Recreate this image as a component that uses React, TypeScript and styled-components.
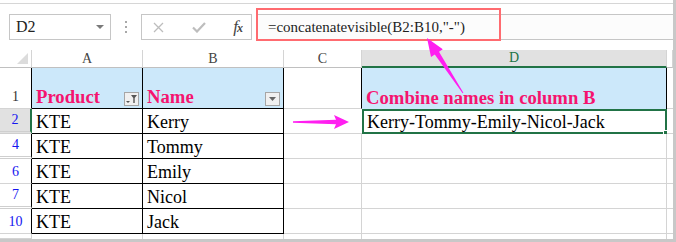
import React from 'react';
import styled, { createGlobalStyle, css } from 'styled-components';

const GlobalStyle = createGlobalStyle`
  html, body {
    margin: 0;
    padding: 0;
    background: #fff;
  }
  * {
    box-sizing: border-box;
  }
`;

const GRID = '#d4d4d4';
const GREEN = '#217346';
const PINK = '#f5146f';
const SERIF = '"Liberation Serif", "Times New Roman", serif';

const Page = styled.div`
  position: relative;
  width: 676px;
  height: 242px;
  background: #fff;
  border-right: 3px solid #c8c8c8;
  border-bottom: 3px solid #c8c8c8;
  font-family: ${SERIF};
  padding-top: 3px;
  overflow: hidden;
`;

const TopRule = styled.div`
  border-top: 1px solid #d6d6d6;
`;

const FormulaRow = styled.div`
  display: flex;
  align-items: stretch;
  height: 26px;
  margin-top: 10px;
`;

const NameBox = styled.div`
  width: 102px;
  margin-left: 9px;
  border: 1px solid #c6c6c6;
  display: flex;
  align-items: center;
  justify-content: space-between;
  padding: 0 6px 0 6px;
  font-size: 16px;
  color: #222;
`;

const Caret = styled.span`
  width: 0;
  height: 0;
  border-left: 4px solid transparent;
  border-right: 4px solid transparent;
  border-top: 4px solid #7a7a7a;
`;

const Dots = styled.div`
  width: 30px;
  display: flex;
  flex-direction: column;
  align-items: center;
  justify-content: center;
  gap: 3px;

  span {
    width: 2px;
    height: 2px;
    background: #a8a8a8;
  }
`;

const FxBox = styled.div`
  width: 111px;
  border: 1px solid #c6c6c6;
  display: flex;
  align-items: center;
  padding: 0 9px 0 11px;
  justify-content: space-between;
`;

const Fx = styled.span`
  font-family: ${SERIF};
  font-style: italic;
  font-size: 17px;
  color: #444;
  letter-spacing: -1px;

  small {
    font-size: 12px;
    font-weight: 700;
  }
`;

const FormulaInput = styled.div`
  flex: 1;
  margin-left: 5px;
  border-top: 1px solid #c6c6c6;
  border-bottom: 1px solid #c6c6c6;
  background: #fcfcfc;
  display: flex;
  align-items: center;
  padding-left: 11px;
  font-size: 15px;
  color: #1e1e1e;
`;

const Sheet = styled.div`
  margin-top: 10px;
  display: grid;
  grid-template-columns: 32px 111px 141px 78px 305px 6px;
  grid-template-rows: 18px 41px repeat(5, 25px) 5px;
`;

const Corner = styled.div`
  border-right: 1px solid ${GRID};
  border-bottom: 1px solid #c0c0c0;
  position: relative;

  &::after {
    content: '';
    position: absolute;
    right: 3px;
    bottom: 3px;
    border-left: 11px solid transparent;
    border-bottom: 11px solid #dcdcdc;
  }
`;

const ColHead = styled.div<{ $active?: boolean }>`
  display: flex;
  align-items: center;
  justify-content: center;
  font-size: 14px;
  color: #444;
  border-right: 1px solid ${GRID};
  border-bottom: 1px solid #c0c0c0;
  ${(p) =>
    p.$active &&
    css`
      background: #e1e1e1;
      color: ${GREEN};
      border-bottom: 2px solid ${GREEN};
    `}
`;

const RowHead = styled.div<{ $color: string; $selected?: boolean; $hidden?: boolean; $edge?: string }>`
  display: flex;
  align-items: flex-end;
  justify-content: center;
  font-size: 14px;
  line-height: 18px;
  padding-bottom: 2px;
  color: ${(p) => p.$color};
  border-right: 1px solid ${(p) => p.$edge || GRID};
  border-bottom: ${(p) => (p.$hidden ? `3px double #cfcfcf` : `1px solid ${GRID}`)};
  ${(p) =>
    p.$selected &&
    css`
      background: #e1e1e1;
      border-right: 2px solid ${GREEN};
    `}
`;

const Cell = styled.div<{ $fill?: string; $right?: string; $bottom?: string; $bold?: boolean }>`
  position: relative;
  display: flex;
  align-items: flex-end;
  justify-content: space-between;
  padding: 0 3px 1px 4px;
  font-size: ${(p) => (p.$bold ? '18.7px' : '18px')};
  font-weight: ${(p) => (p.$bold ? 700 : 400)};
  line-height: 20px;
  color: ${(p) => (p.$bold ? PINK : '#000')};
  white-space: nowrap;
  background: ${(p) => p.$fill || '#fff'};
  border-right: ${(p) => (p.$right === 'none' ? 'none' : `1px solid ${p.$right || GRID}`)};
  border-bottom: ${(p) => (p.$bottom === 'none' ? 'none' : `1px solid ${p.$bottom || GRID}`)};
`;

const ResultCell = styled(Cell)`
  border: 2px solid ${GREEN};
  padding: 0 3px 0 3px;
`;

const FillHandle = styled.span`
  position: absolute;
  right: -4px;
  bottom: -4px;
  width: 6px;
  height: 6px;
  background: ${GREEN};
  border: 1px solid #fff;
`;

const FilterButton = styled.span`
  width: 15px;
  height: 14px;
  margin-bottom: 1px;
  border: 1px solid #a6a6a6;
  background: #f0f0f0;
  display: flex;
  align-items: center;
  justify-content: center;
`;

const RedFrame = styled.div`
  position: absolute;
  left: 256px;
  top: 8px;
  width: 245px;
  height: 33px;
  border: 2px solid #ff6b70;
  pointer-events: none;
`;

const Overlay = styled.svg`
  position: absolute;
  left: 0;
  top: 0;
  pointer-events: none;
`;

const BLUE_ROW = '#1515f0';
const rows = [
  { num: '2', a: 'KTE', b: 'Kerry', hidden: true },
  { num: '4', a: 'KTE', b: 'Tommy', hidden: true },
  { num: '6', a: 'KTE', b: 'Emily' },
  { num: '7', a: 'KTE', b: 'Nicol', hidden: true },
  { num: '10', a: 'KTE', b: 'Jack' },
];

function FilterIcon() {
  return (
    <svg width="13" height="12" viewBox="0 0 13 12">
      <path d="M1 8h4l-2 2z" fill="#555" />
      <path d="M6 2h6l-2.3 3v5h-1.4v-5z" fill="#555" />
    </svg>
  );
}

function DropIcon() {
  return (
    <svg width="9" height="6" viewBox="0 0 9 6">
      <path d="M1 1h7l-3.5 4z" fill="#666" />
    </svg>
  );
}

export default function App() {
  return (
    <>
      <GlobalStyle />
      <Page>
        <TopRule />
        <FormulaRow>
          <NameBox>
            D2
            <Caret />
          </NameBox>
          <Dots>
            <span />
            <span />
            <span />
          </Dots>
          <FxBox>
            <svg width="11" height="11" viewBox="0 0 11 11">
              <path d="M1 1l9 9M10 1l-9 9" stroke="#bdbdbd" strokeWidth="1.3" />
            </svg>
            <svg width="14" height="11" viewBox="0 0 14 11">
              <path d="M1 5.5l4 4 8-8.5" stroke="#bdbdbd" strokeWidth="2.2" fill="none" />
            </svg>
            <Fx>
              f<small>x</small>
            </Fx>
          </FxBox>
          <FormulaInput>=concatenatevisible(B2:B10,"-")</FormulaInput>
        </FormulaRow>

        <Sheet>
          <Corner />
          <ColHead>A</ColHead>
          <ColHead>B</ColHead>
          <ColHead>C</ColHead>
          <ColHead $active>D</ColHead>
          <ColHead />

          <RowHead $color="#333" $edge="#000">1</RowHead>
          <Cell $fill="#cce8fa" $right="#000" $bottom="#000" $bold>
            Product
            <FilterButton>
              <FilterIcon />
            </FilterButton>
          </Cell>
          <Cell $fill="#cce8fa" $right="#000" $bottom="#000" $bold>
            Name
            <FilterButton>
              <DropIcon />
            </FilterButton>
          </Cell>
          <Cell $right="#000" />
          <Cell $fill="#cce8fa" $right="#000" $bottom="none" $bold>
            Combine names in column B
          </Cell>
          <Cell $right="none" />

          {rows.map((r, i) => (
            <React.Fragment key={r.num}>
              <RowHead $color={BLUE_ROW} $selected={i === 0} $hidden={r.hidden} $edge="#000">
                {r.num}
              </RowHead>
              <Cell $right="#000" $bottom="#000">
                {r.a}
              </Cell>
              <Cell $right="#000" $bottom="#000">
                {r.b}
              </Cell>
              <Cell $right={i === 0 ? 'none' : GRID} />
              {i === 0 ? (
                <ResultCell>
                  Kerry-Tommy-Emily-Nicol-Jack
                  <FillHandle />
                </ResultCell>
              ) : (
                <Cell />
              )}
              <Cell $right="none" />
            </React.Fragment>
          ))}

          <RowHead $color={BLUE_ROW} />
          <Cell $bottom="none" />
          <Cell $bottom="none" />
          <Cell $bottom="none" />
          <Cell $bottom="none" />
          <Cell $bottom="none" $right="none" />
        </Sheet>

        <RedFrame />
        <Overlay width="676" height="242" viewBox="0 0 676 242">
          <path d="M293 121.3 L336 119.8 L334 115 L349 122 L334 129 L336 124.2 L293 122.7 Z" fill="#ff1ff0" />
          <path
            d="M427 38 L442.8 49.3 L439 51.7 L463.4 92.7 L462.6 93.3 L434.8 54.5 L431 56.9 Z"
            fill="#ff1ff0"
          />
        </Overlay>
      </Page>
    </>
  );
}
